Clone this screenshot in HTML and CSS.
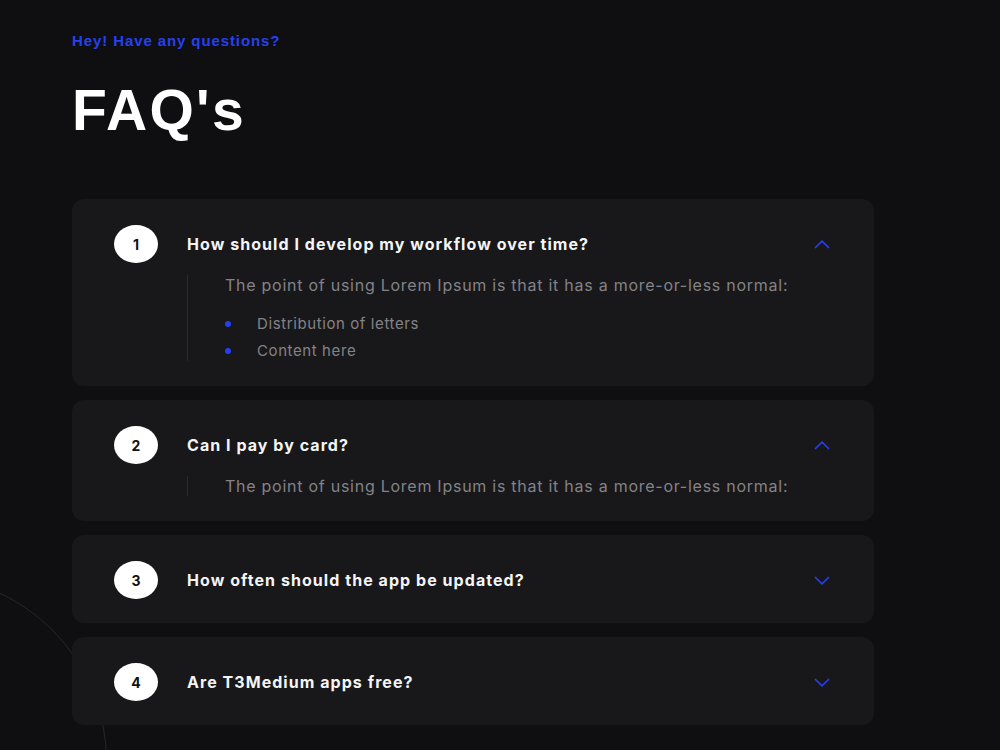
FILE: index.html
```html
<!DOCTYPE html>
<html>
<head>
<meta charset="utf-8">
<link rel="stylesheet" href="styles.css">
</head>
<body>
<div class="deco"></div>
<main class="page">
  <p class="eyebrow">Hey! Have any questions?</p>
  <h1 class="title">FAQ's</h1>
  <section class="faq-list">
    <article class="card">
      <div class="head">
        <span class="num">1</span>
        <span class="q">How should I develop my workflow over time?</span>
        <svg class="chev" width="16" height="9" viewBox="0 0 16 9"><path d="M1 8 L8 1.2 L15 8" fill="none" stroke="#2540f2" stroke-width="1.6"/></svg>
      </div>
      <div class="body">
        <p class="ans">The point of using Lorem Ipsum is that it has a more-or-less normal:</p>
        <ul class="list">
          <li>Distribution of letters</li>
          <li>Content here</li>
        </ul>
      </div>
    </article>
    <article class="card">
      <div class="head">
        <span class="num">2</span>
        <span class="q">Can I pay by card?</span>
        <svg class="chev" width="16" height="9" viewBox="0 0 16 9"><path d="M1 8 L8 1.2 L15 8" fill="none" stroke="#2540f2" stroke-width="1.6"/></svg>
      </div>
      <div class="body">
        <p class="ans">The point of using Lorem Ipsum is that it has a more-or-less normal:</p>
      </div>
    </article>
    <article class="card">
      <div class="head">
        <span class="num">3</span>
        <span class="q">How often should the app be updated?</span>
        <svg class="chev" width="16" height="9" viewBox="0 0 16 9"><path d="M1 1 L8 7.8 L15 1" fill="none" stroke="#2540f2" stroke-width="1.6"/></svg>
      </div>
    </article>
    <article class="card">
      <div class="head">
        <span class="num">4</span>
        <span class="q">Are T3Medium apps free?</span>
        <svg class="chev" width="16" height="9" viewBox="0 0 16 9"><path d="M1 1 L8 7.8 L15 1" fill="none" stroke="#2540f2" stroke-width="1.6"/></svg>
      </div>
    </article>
  </section>
</main>
</body>
</html>
```
FILE: styles.css
```css
html, body {
  margin: 0;
  padding: 0;
  background: #0f0f11;
  height: 100%;
  overflow: hidden;
}
body {
  font-family: Inter, "Liberation Sans", sans-serif;
  color: #fff;
  position: relative;
}
.deco {
  position: absolute;
  left: -265px;
  top: 575px;
  width: 370px;
  height: 370px;
  border: 1px solid #26262a;
  border-radius: 50%;
}
.page {
  position: relative;
  width: 802px;
  margin-left: 72px;
  padding-top: 31px;
}
.eyebrow {
  margin: 0;
  font-size: 15px;
  line-height: 20px;
  font-weight: 700;
  color: #2641f0;
  font-family: "Liberation Sans", Arial, sans-serif;
  letter-spacing: 0.9px;
}
.title {
  margin: 26px 0 0 0;
  font-size: 57px;
  line-height: 66px;
  font-weight: 700;
  font-family: "Liberation Sans", Arial, sans-serif;
  letter-spacing: 2.3px;
}
.faq-list {
  margin-top: 56px;
  display: flex;
  flex-direction: column;
  gap: 14px;
}
.card {
  background: #18181b;
  border-radius: 12px;
  padding: 26px 42px 24px 42px;
}
.head {
  display: flex;
  align-items: center;
  height: 38px;
}
.num {
  width: 44px;
  height: 38px;
  border-radius: 50%;
  background: #fff;
  color: #111;
  font-size: 14px;
  font-weight: 700;
  display: flex;
  align-items: center;
  justify-content: center;
  flex: none;
}
.q {
  margin-left: 29px;
  font-size: 16px;
  font-weight: 700;
  color: #f4f4f5;
  letter-spacing: 1.05px;
  flex: 1;
}
.chev {
  margin-right: 2px;
  flex: none;
}
.body {
  margin: 12px 0 1px 73px;
  border-left: 1px solid #29292d;
  padding-left: 37px;
}
.ans {
  margin: 0;
  font-size: 16px;
  line-height: 20px;
  color: #838387;
  letter-spacing: 0.74px;
}
.list {
  list-style: none;
  margin: 19px 0 0 0;
  padding: 0;
  display: flex;
  flex-direction: column;
  gap: 7px;
}
.list li {
  position: relative;
  padding-left: 32px;
  font-size: 15px;
  line-height: 20px;
  color: #838387;
  letter-spacing: 0.6px;
}
.list li::before {
  content: "";
  position: absolute;
  left: 0;
  top: 7px;
  width: 6px;
  height: 6px;
  border-radius: 50%;
  background: #2540f2;
}
```
